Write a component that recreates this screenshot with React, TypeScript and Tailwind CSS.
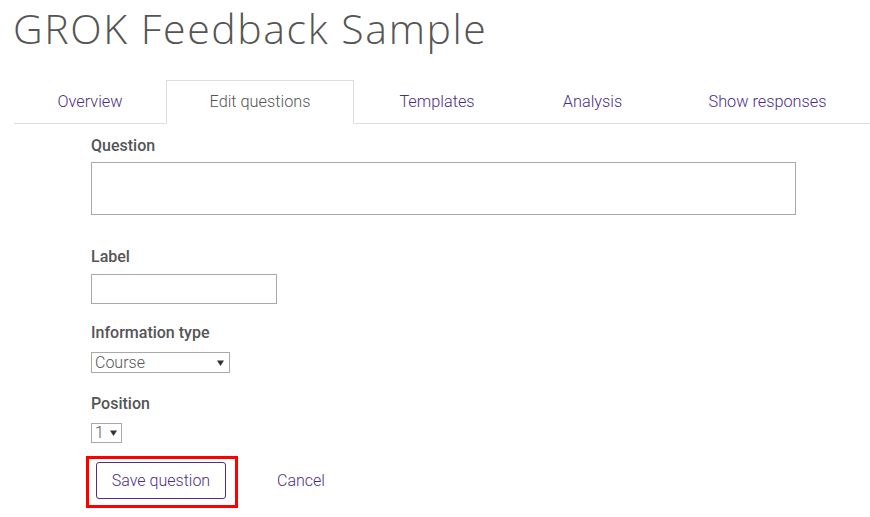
import React from "react";

function Arrow() {
  return (
    <svg width="7" height="6" viewBox="0 0 7 6" className="shrink-0">
      <path d="M0 0.5 L7 0.5 L3.5 6 Z" fill="#333" />
    </svg>
  );
}

const tabs = [
  { label: "Overview", w: "w-[152px]" },
  { label: "Edit questions", w: "w-[188px]" },
  { label: "Templates", w: "w-[166px]" },
  { label: "Analysis", w: "w-[145px]" },
  { label: "Show responses", w: "w-[205px]" },
];

export default function App() {
  return (
    <div className="w-[870px] h-[517px] bg-white overflow-hidden" style={{ fontFamily: "Roboto, 'Liberation Sans', sans-serif" }}>
      <div className="h-[80px] pl-[13px]">
        <h1
          className="text-[41px] leading-[56px] font-light text-[#555] whitespace-nowrap tracking-[1.6px]"
          style={{ fontFamily: "'Open Sans', Lato, sans-serif" }}
        >
          GROK Feedback Sample
        </h1>
      </div>
      <div className="ml-[14px] flex border-b border-[#ddd] h-[44px]">
        {tabs.map((t) => {
          const active = t.label === "Edit questions";
          return (
            <div
              key={t.label}
              className={
                (active
                  ? "border border-[#ddd] border-b-white bg-white text-[#555] -mb-px "
                  : "text-[#4b2e83] ") +
                t.w +
                " shrink-0 whitespace-nowrap h-[44px] flex items-center justify-center text-[16.3px] font-light"
              }
            >
              {t.label}
            </div>
          );
        })}
      </div>
      <div className="pl-[91px] pt-[12px]">
        <div className="text-[16px] leading-[20px] font-medium text-[#555]">Question</div>
        <div className="mt-[6px] w-[705px] h-[53px] border border-[#a9a9a9]" />
        <div className="mt-[32px] text-[16px] leading-[20px] font-medium text-[#555]">Label</div>
        <div className="mt-[7px] w-[186px] h-[30px] border border-[#a9a9a9]" />
        <div className="mt-[19px] text-[16px] leading-[20px] font-medium text-[#555]">Information type</div>
        <div className="mt-[9px] w-[139px] h-[21px] border border-[#a9a9a9] flex items-center justify-between pl-[3px] pr-[5px]">
          <span className="text-[16px] font-light text-[#555] leading-none">Course</span>
          <Arrow />
        </div>
        <div className="mt-[21px] text-[16px] leading-[20px] font-medium text-[#555]">Position</div>
        <div className="mt-[9px] w-[31px] h-[20px] border border-[#a9a9a9] flex items-center justify-between pl-[3px] pr-[4px]">
          <span className="text-[16px] font-light text-[#555] leading-none">1</span>
          <Arrow />
        </div>
        <div className="mt-[13px] -ml-[5px] flex items-center">
          <div className="border-[3px] border-[#ff0000] pl-[7px] pr-[9px] pt-[3px] pb-[6px]">
            <div className="w-[130px] h-[37px] border border-[#4b2e83] rounded-[3px] flex items-center justify-center text-[16px] font-light text-[#4b2e83]">
              Save question
            </div>
          </div>
          <div className="ml-[39px] -mt-[2px] text-[16px] font-light text-[#4b2e83]">Cancel</div>
        </div>
      </div>
    </div>
  );
}
